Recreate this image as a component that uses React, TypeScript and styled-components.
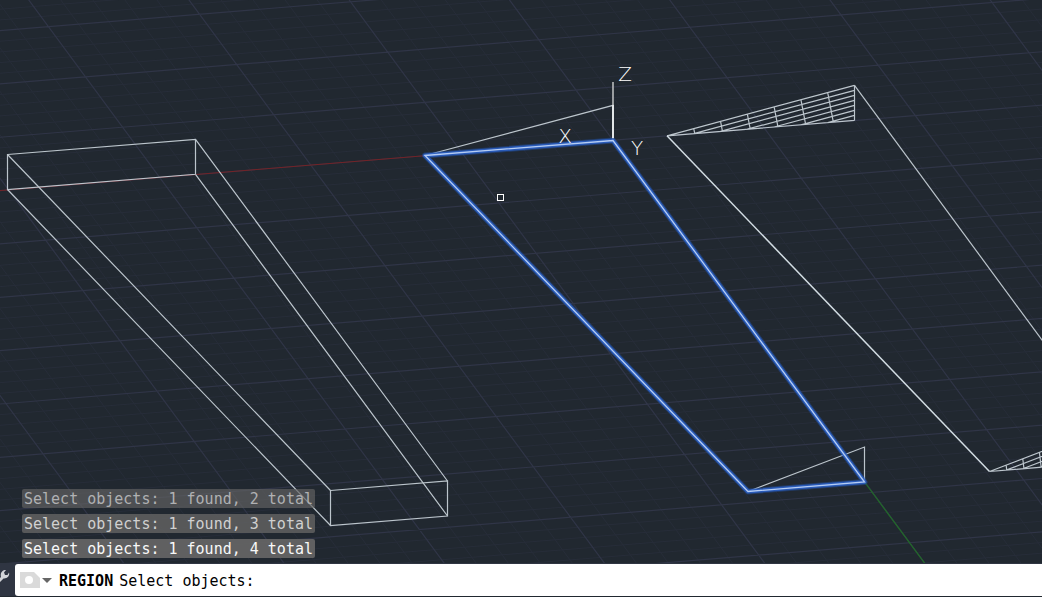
import React from "react";
import styled, { createGlobalStyle } from "styled-components";

const GlobalStyle = createGlobalStyle`
  * { box-sizing: border-box; }
  body { margin: 0; background: #212830; }
`;

const mono = `"DejaVu Sans Mono", "Liberation Mono", monospace`;

const Shell = styled.main`
  display: flex;
  flex-direction: column;
  min-height: 100vh;
  overflow: hidden;
`;

const Viewport = styled.section`
  position: relative;
  flex: 1;
  display: flex;
  flex-direction: column;
  justify-content: flex-end;
  overflow: hidden;
  background: #212830;
`;

const Scene = styled.svg`
  position: absolute;
  inset: 0;
  width: 100%;
  height: 100%;
`;

const AxisLabel = styled.text`
  font: 200 20px "DejaVu Sans", Inter, sans-serif;
  fill: #ffffff;
  text-anchor: middle;
`;

const History = styled.ol`
  position: relative;
  display: flex;
  flex-direction: column;
  align-items: flex-start;
  gap: 6px;
  margin: 0;
  padding: 0 22px 5px;
  list-style: none;
`;

const HistoryLine = styled.li<{ $ink: string; $shade: string }>`
  height: 19px;
  padding: 0 2px;
  border-radius: 2px;
  background: ${(p) => p.$shade};
  color: ${(p) => p.$ink};
  font: 15px/21px ${mono};
  white-space: pre;
`;

const CommandDock = styled.form`
  display: flex;
  align-items: center;
  height: 34px;
  background: #2f3542;
  border-bottom: 1px solid #212830;
`;

const IconButton = styled.button`
  display: flex;
  flex: none;
  align-items: center;
  padding: 0;
  border: 0;
  background: none;
`;

const CommandBar = styled.div`
  display: flex;
  flex: 1;
  align-items: center;
  height: 32px;
  min-width: 0;
  padding-left: 5px;
  border-radius: 3px 0 0 3px;
  background: #fff;
`;

const Prompt = styled.label`
  flex: none;
  display: flex;
  gap: 6px;
  padding: 2px 0 0 6px;
  color: #000;
  font: 15px/20px ${mono};
  white-space: pre;
`;

const CommandInput = styled.input`
  flex: 1;
  min-width: 0;
  border: 0;
  outline: 0;
  background: transparent;
  font: 15px/20px ${mono};
`;

type Point = [number, number];

/* Grid cell vectors in screen space, measured from the UCS origin. */
const origin: Point = [613, 140.3];
const across: Point = [151.1, -12.4];
const down: Point = [37.1, 50.3];
const divisions = 5;
const reach = 14;

const at = (a: number, b: number): Point => [
  origin[0] + a * across[0] + b * down[0],
  origin[1] + a * across[1] + b * down[1],
];

const segment = (p: Point, q: Point) => `M${p[0]} ${p[1]}L${q[0]} ${q[1]}`;

const gridPath = (major: boolean) => {
  const parts: string[] = [];
  for (let i = -reach * divisions; i <= reach * divisions; i++) {
    if ((i % divisions === 0) !== major) continue;
    const k = i / divisions;
    parts.push(segment(at(k, -reach), at(k, reach)));
    parts.push(segment(at(-reach, k), at(reach, k)));
  }
  return parts.join("");
};

const mix = (p: Point, q: Point, t: number): Point => [
  p[0] + (q[0] - p[0]) * t,
  p[1] + (q[1] - p[1]) * t,
];

/* Triangular mesh: rows run parallel to the top edge, ribs join top and bottom edges. */
const meshPath = (apex: Point, top: Point, bottom: Point) => {
  const parts = [segment(apex, top), segment(top, bottom), segment(bottom, apex)];
  for (let i = 1; i < 7; i++) {
    parts.push(segment(mix(top, bottom, i / 7), mix(apex, bottom, i / 7)));
    parts.push(segment(mix(apex, top, i / 7), mix(apex, bottom, (i * 1.035) / 7)));
  }
  return parts.join("");
};

const selected = "M425 155.5L613 140.5L864.5 482L748 491.5Z";

function Drawing() {
  return (
    <Scene role="img" aria-label="Wireframe model" fill="none">
      <path d={gridPath(false)} stroke="#272d39" />
      <path d={gridPath(true)} stroke="#303547" strokeWidth="1.2" />
      <path d={segment(at(-5, 0), [425, 155.7])} stroke="#732327" />
      <path d={segment([864.5, 482], at(0, 10))} stroke="#216b28" strokeWidth="1.2" />
      <g stroke="#bcc5cc" strokeWidth="1.2">
        <path d="M7.5 154.5L195.5 139.3V174.3L7.5 189.5Z" />
        <path d="M330.5 490.5L447.5 481V516L330.5 525.5Z" />
        <path d="M7.5 154.5L330.5 490.5M195.5 139.3L447.5 481M195.5 174.3L447.5 516M7.5 189.5L330.5 525.5" />
        <path d="M425 155.5L613 105.3V140M748 491.5L864.5 447V482" />
        <path d={meshPath([667, 135.8], [854.5, 85.3], [854.5, 120.4])} />
        <path d={meshPath([989.5, 471.5], [1106, 427], [1106, 462])} />
        <path d="M854.5 85.3L1106 427" />
      </g>
      <path d="M667 135.8L989.5 471.5" stroke="#d3dde3" strokeWidth="1.5" />
      <path d={selected} stroke="#2458b8" strokeOpacity="0.4" strokeWidth="6" strokeLinejoin="round" />
      <path d={selected} stroke="#2b62c8" strokeOpacity="0.85" strokeWidth="4" strokeLinejoin="round" />
      <path d={selected} stroke="#b4ccf4" strokeWidth="1.3" />
      <path d="M613 82V105" stroke="#b9bbbd" strokeWidth="1.6" />
      <path d="M613 105V138" stroke="#e2e6e8" strokeWidth="2" />
      <AxisLabel x="625" y="81">Z</AxisLabel>
      <AxisLabel x="565" y="143">X</AxisLabel>
      <AxisLabel x="637" y="155">Y</AxisLabel>
      <rect x="497.5" y="194.5" width="6" height="6" stroke="#fff" />
    </Scene>
  );
}

const history = [
  { text: "Select objects: 1 found, 2 total", ink: "#b0b1b3", shade: "rgba(99, 99, 99, 0.68)" },
  { text: "Select objects: 1 found, 3 total", ink: "#d0d0d0", shade: "rgba(99, 99, 99, 0.82)" },
  { text: "Select objects: 1 found, 4 total", ink: "#f8f8f8", shade: "rgba(99, 99, 99, 0.96)" },
];

export default function App() {
  return (
    <>
      <GlobalStyle />
      <Shell>
        <Viewport>
          <Drawing />
          <History>
            {history.map((line) => (
              <HistoryLine key={line.text} $ink={line.ink} $shade={line.shade}>
                {line.text}
              </HistoryLine>
            ))}
          </History>
        </Viewport>
        <CommandDock onSubmit={(e) => e.preventDefault()}>
          <IconButton type="button" aria-label="Customize">
            <svg width="15" height="32">
              <path
                d="M-2 16L1 13C0 9 2 6 6 6L4 8.500L5 11L7.500 11L9 8.500C10 12 7 15 3.500 14.500L-2 20Z"
                fill="#d3d5d9"
              />
            </svg>
          </IconButton>
          <CommandBar>
            <IconButton type="button" aria-label="Recent commands">
              <svg width="33" height="18">
                <path d="M0 1H14L20 7V17H0Z" fill="#dadada" />
                <circle cx="9" cy="9" r="4" fill="#fff" />
                <path d="M22 7H32L27 12Z" fill="#666" />
              </svg>
            </IconButton>
            <Prompt htmlFor="command">
              <b>REGION</b>
              <span>Select objects:</span>
            </Prompt>
            <CommandInput id="command" autoComplete="off" />
          </CommandBar>
        </CommandDock>
      </Shell>
    </>
  );
}
